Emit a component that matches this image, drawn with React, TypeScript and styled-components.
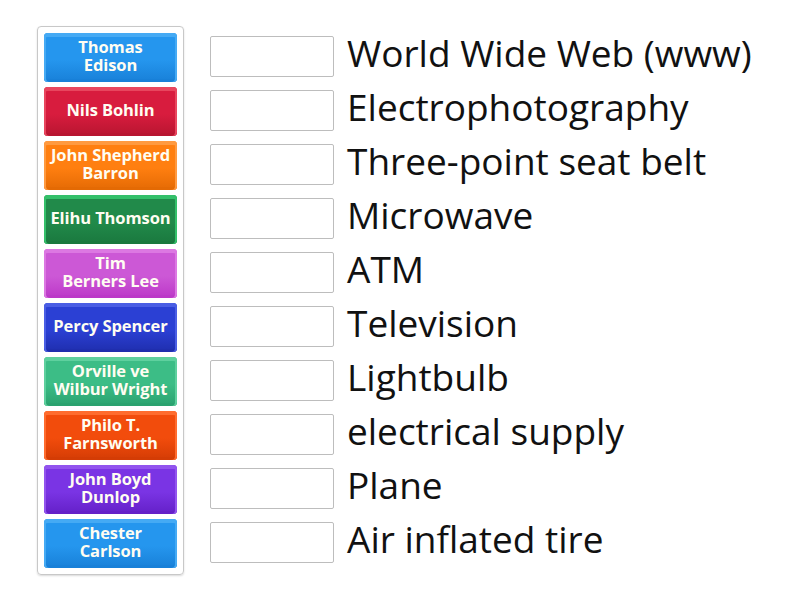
import React from 'react';
import styled, {createGlobalStyle} from 'styled-components';

const GlobalStyle = createGlobalStyle`
    body {
        margin: 0;
        background: #ffffff;
        font-family: 'Open Sans', 'Noto Sans', sans-serif;
    }
`;

const Page = styled.div`
    width: 800px;
    height: 600px;
    display: flex;
    align-items: flex-start;
    gap: 26px;
    padding: 26px 0 0 37px;
    box-sizing: border-box;
`;

const Bank = styled.div`
    width: 147px;
    box-sizing: border-box;
    padding: 6px;
    border: 1px solid #c8c8c8;
    border-radius: 4px;
    box-shadow: 0 1px 2px rgba(0, 0, 0, 0.15);
    display: flex;
    flex-direction: column;
    gap: 5px;
`;

const Card = styled.div<{$color: string; $light: string; $dark: string}>`
    height: 49px;
    box-sizing: border-box;
    border-radius: 4px;
    background: linear-gradient(to bottom, ${(p) => p.$color} 0%, ${(p) => p.$color} 55%, ${(p) => p.$dark} 100%);
    box-shadow:
        inset 0 4px 0 ${(p) => p.$light},
        inset 2px 0 0 ${(p) => p.$light},
        inset -2px 0 0 ${(p) => p.$light},
        inset 0 -3px 0 ${(p) => p.$dark};
    display: flex;
    align-items: center;
    justify-content: center;
    text-align: center;
    color: #fffdf2;
    font-weight: 700;
    font-size: 16.5px;
    line-height: 18px;
    padding: 0 0 3px;
    white-space: pre-line;
    letter-spacing: -0.1px;
`;

const Targets = styled.div`
    display: flex;
    flex-direction: column;
    gap: 5px;
    padding-top: 6px;
`;

const Row = styled.div`
    height: 49px;
    display: flex;
    align-items: center;
    gap: 13px;
`;

const Slot = styled.div`
    width: 124px;
    height: 41px;
    box-sizing: border-box;
    border: 1px solid #bdbdbd;
    border-radius: 2px;
    background: #fff;
    flex-shrink: 0;
`;

const Label = styled.span`
    font-size: 37px;
    color: #111;
    white-space: nowrap;
    line-height: 1;
    margin-top: -8px;
`;

const cards = [
    {name: 'Thomas\nEdison', color: '#2596ee', light: '#45aaf4', dark: '#1880d8'},
    {name: 'Nils Bohlin', color: '#d81c3e', light: '#e8465e', dark: '#b81530'},
    {name: 'John Shepherd\nBarron', color: '#ff7f10', light: '#ff9a40', dark: '#e46a04'},
    {name: 'Elihu Thomson', color: '#218a4a', light: '#34c06a', dark: '#1a783e'},
    {name: 'Tim\nBerners Lee', color: '#cc58d6', light: '#dc78e2', dark: '#bc38c8'},
    {name: 'Percy Spencer', color: '#2b40d4', light: '#4a5ee4', dark: '#1f2eae'},
    {name: 'Orville ve\nWilbur Wright', color: '#3cbd86', light: '#5ed09e', dark: '#2aa26f'},
    {name: 'Philo T.\nFarnsworth', color: '#f24c0c', light: '#ff6c2e', dark: '#d43c05'},
    {name: 'John Boyd\nDunlop', color: '#7a34e4', light: '#9254ee', dark: '#6420c8'},
    {name: 'Chester\nCarlson', color: '#2596ee', light: '#45aaf4', dark: '#1880d8'},
];

const labels = [
    'World Wide Web (www)',
    'Electrophotography',
    'Three-point seat belt',
    'Microwave',
    'ATM',
    'Television',
    'Lightbulb',
    'electrical supply',
    'Plane',
    'Air inflated tire',
];

const App = () => {
    return (
        <>
            <GlobalStyle />
            <Page>
                <Bank>
                    {cards.map((c) => (
                        <Card key={c.name} $color={c.color} $light={c.light} $dark={c.dark}>
                            {c.name}
                        </Card>
                    ))}
                </Bank>
                <Targets>
                    {labels.map((l) => (
                        <Row key={l}>
                            <Slot />
                            <Label>{l}</Label>
                        </Row>
                    ))}
                </Targets>
            </Page>
        </>
    );
};

export default App;
